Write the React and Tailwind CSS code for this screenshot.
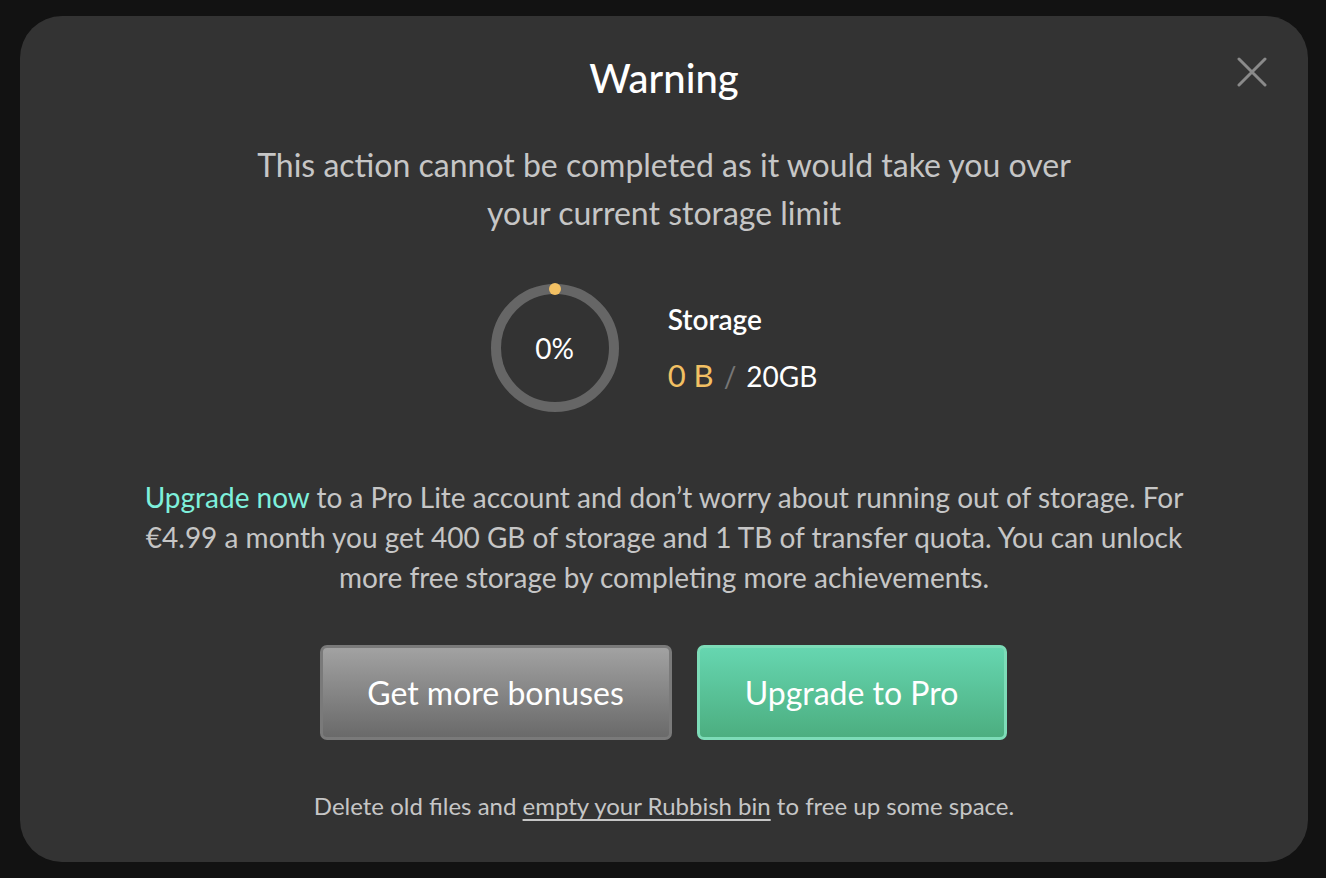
import React from "react";

const font = { fontFamily: "Lato, 'Open Sans', sans-serif" };

function StorageRing() {
  // ring with a tiny dot for 0% usage
  return (
    <div className="relative w-[132px] h-[132px]">
      <svg width="132" height="132" viewBox="0 0 132 132" className="absolute inset-0">
        <circle cx="66" cy="66" r="59" fill="none" stroke="#666666" strokeWidth="10" />
        <circle cx="66" cy="7" r="6" fill="#f2c063" />
      </svg>
      <div className="absolute inset-0 flex items-center justify-center text-[28px] text-white">0%</div>
    </div>
  );
}

export default function App() {
  return (
    <div className="w-[1326px] h-[878px] bg-[#121212] pt-[16px] pl-[20px]" style={font}>
      <div className="relative w-[1288px] h-[846px] bg-[#333333] rounded-[42px] flex flex-col items-center pt-[38px]">
        {/* close */}
        <button className="absolute right-[40px] top-[40px] w-[32px] h-[32px] flex items-center justify-center">
          <svg width="30" height="30" viewBox="0 0 30 30">
            <path d="M2 2 L28 28 M28 2 L2 28" stroke="#8a8a8a" strokeWidth="3" strokeLinecap="round" />
          </svg>
        </button>

        <h1 className="text-[40px] leading-[48px] font-medium text-white">Warning</h1>

        <p className="mt-[39px] text-[32px] leading-[48px] text-[#c6c6c6] text-center">
          This action cannot be completed as it would take you over
          <br />
          your current storage limit
        </p>

        <div className="mt-[45px] flex items-center gap-[47px] pr-[22px]">
          <StorageRing />
          <div className="flex flex-col -mt-[2px]">
            <span className="text-[28px] font-semibold text-white leading-[36px]">Storage</span>
            <div className="mt-[20px] flex items-baseline leading-[36px]">
              <span className="text-[31px] text-[#f2c063]">0 B</span>
              <span className="text-[28px] text-[#777777] mx-[10px]">/</span>
              <span className="text-[28px] text-white">20GB</span>
            </div>
          </div>
        </div>

        <p className="mt-[63px] text-[28px] leading-[40px] text-[#c6c6c6] text-center">
          <span className="text-[#7ef0dc]">Upgrade now</span> to a Pro Lite account and don’t worry about running out of storage. For
          <br />
          €4.99 a month you get 400 GB of storage and 1 TB of transfer quota. You can unlock
          <br />
          more free storage by completing more achievements.
        </p>

        <div className="mt-[48px] flex gap-[25px] pr-[2px]">
          <button className="w-[352px] h-[95px] rounded-[7px] border-[3px] border-[#7a7a7a] bg-gradient-to-b from-[#a2a2a2] to-[#6a6a6a] text-[32px] text-white">
            Get more bonuses
          </button>
          <button className="w-[310px] h-[95px] rounded-[7px] border-[3px] border-[#7ddcb8] bg-gradient-to-b from-[#66d6b0] to-[#4cae80] text-[32px] text-white">
            Upgrade to Pro
          </button>
        </div>

        <p className="mt-[50px] text-[24px] leading-[32px] text-[#c6c6c6]">
          Delete old files and <span className="underline underline-offset-4">empty your Rubbish bin</span> to free up some space.
        </p>
      </div>
    </div>
  );
}
